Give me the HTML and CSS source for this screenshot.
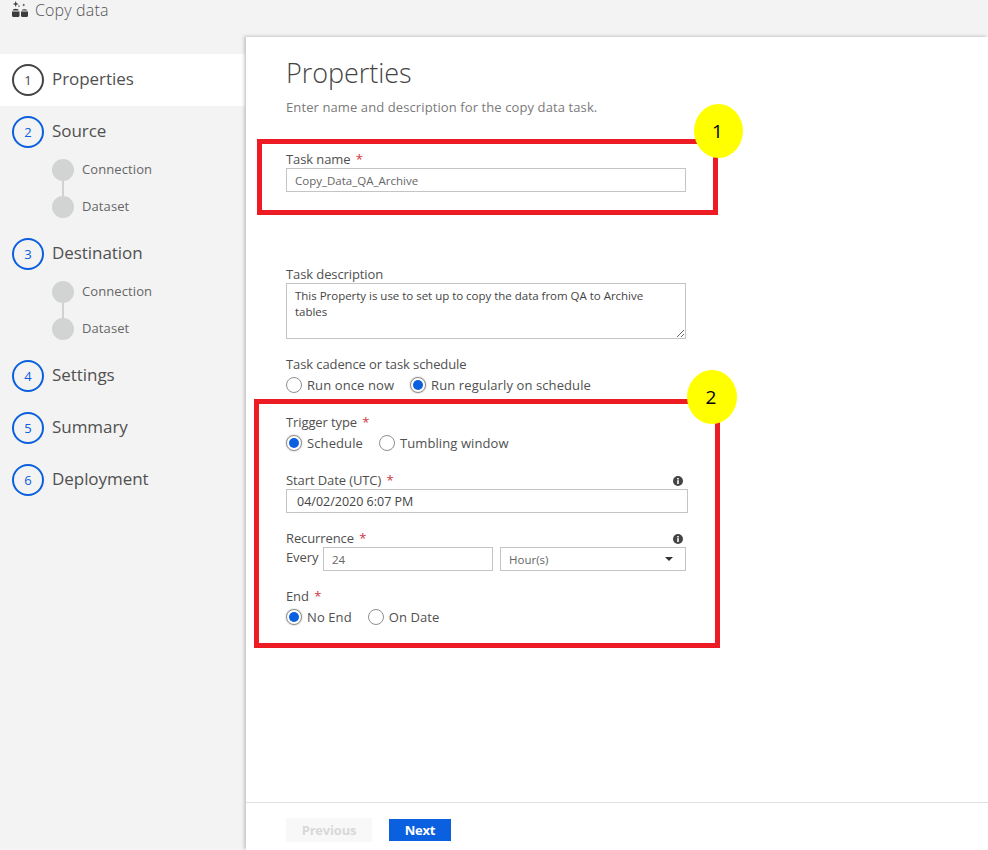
FILE: index.html
```html
<!DOCTYPE html>
<html lang="en">
<head>
<meta charset="utf-8">
<title>Copy data</title>
<link rel="stylesheet" href="styles.css">
</head>
<body>
<div class="app">
  <header class="topbar">
    <svg class="logo" width="17" height="17" viewBox="0 0 17 17">
      <path class="logo-dark" d="M0 10.500h7.500v4a1.500 1.500 0 0 1-1.500 1.500h-4.500a1.500 1.500 0 0 1-1.500-1.500z"/>
      <path class="logo-dark" d="M9 10.500h7v4a1.500 1.500 0 0 1-1.500 1.500h-4a1.500 1.500 0 0 1-1.500-1.500z"/>
      <path class="logo-dark" d="M.7 9.500a3 1.800 0 0 1 6 0zM9.600 9.500a3 1.800 0 0 1 5.800 0z"/>
      <path class="logo-dark" d="M3.700 0l.8 2.200 2.200.8-2.200.8-.8 2.200-.8-2.200-2.200-.8 2.200-.8zM11.800 2.500l.4 1.100 1.100.4-1.100.4-.4 1.100-.4-1.100-1.100-.4 1.100-.4zM7 4l.3.8.8.3-.8.3-.3.8-.3-.8-.8-.3.8-.3z"/>
    </svg>
    <span class="topbar-title">Copy data</span>
  </header>
  <div class="body-row">
    <nav class="sidebar">
      <div class="step step-active"><span class="step-num">1</span><span class="step-name">Properties</span></div>
      <div class="step"><span class="step-num">2</span><span class="step-name">Source</span></div>
      <div class="substeps">
        <div class="substep"><span class="dot"></span><span class="substep-name">Connection</span></div>
        <div class="substep"><span class="dot"></span><span class="substep-name">Dataset</span></div>
      </div>
      <div class="step"><span class="step-num">3</span><span class="step-name">Destination</span></div>
      <div class="substeps">
        <div class="substep"><span class="dot"></span><span class="substep-name">Connection</span></div>
        <div class="substep"><span class="dot"></span><span class="substep-name">Dataset</span></div>
      </div>
      <div class="step"><span class="step-num">4</span><span class="step-name">Settings</span></div>
      <div class="step"><span class="step-num">5</span><span class="step-name">Summary</span></div>
      <div class="step"><span class="step-num">6</span><span class="step-name">Deployment</span></div>
    </nav>
    <main class="panel">
      <div class="panel-scroll">
        <h1 class="title">Properties</h1>
        <p class="subtitle">Enter name and description for the copy data task.</p>

        <div class="field field-name">
          <label class="label">Task name <em>*</em></label>
          <input class="input" type="text" value="Copy_Data_QA_Archive">
        </div>

        <div class="field field-desc">
          <label class="label">Task description</label>
          <textarea class="textarea">This Property is use to set up to copy the data from QA to Archive tables</textarea>
        </div>

        <div class="field field-cadence">
          <label class="label">Task cadence or task schedule</label>
          <div class="radios">
            <span class="radio"><i class="circle"></i>Run once now</span>
            <span class="radio radio-on"><i class="circle"></i>Run regularly on schedule</span>
          </div>
        </div>

        <div class="field field-trigger">
          <label class="label">Trigger type <em>*</em></label>
          <div class="radios">
            <span class="radio radio-on"><i class="circle"></i>Schedule</span>
            <span class="radio"><i class="circle"></i>Tumbling window</span>
          </div>
        </div>

        <div class="field field-wide field-next">
          <div class="label-row">
            <label class="label">Start Date (UTC) <em>*</em></label>
            <svg class="info" width="10" height="10" viewBox="0 0 10 10"><circle cx="5" cy="5" r="5"/><rect class="info-i" x="4.200" y="4.200" width="1.600" height="3.800"/><rect class="info-i" x="4.200" y="2" width="1.600" height="1.500"/></svg>
          </div>
          <input class="input input-date" type="text" value="04/02/2020 6:07 PM">
        </div>

        <div class="field field-next">
          <div class="label-row label-row-narrow">
            <label class="label">Recurrence <em>*</em></label>
            <svg class="info" width="10" height="10" viewBox="0 0 10 10"><circle cx="5" cy="5" r="5"/><rect class="info-i" x="4.200" y="4.200" width="1.600" height="3.800"/><rect class="info-i" x="4.200" y="2" width="1.600" height="1.500"/></svg>
          </div>
          <div class="recur">
            <span class="every">Every</span>
            <input class="input input-num" type="text" value="24">
            <div class="select"><span>Hour(s)</span><i class="caret"></i></div>
          </div>
        </div>

        <div class="field field-next">
          <label class="label">End <em>*</em></label>
          <div class="radios">
            <span class="radio radio-on"><i class="circle"></i>No End</span>
            <span class="radio"><i class="circle"></i>On Date</span>
          </div>
        </div>
      </div>
      <footer class="actions">
        <button class="btn btn-prev" type="button">Previous</button>
        <button class="btn btn-next" type="button">Next</button>
      </footer>
      <div class="mark mark-one"></div>
      <div class="mark mark-two"></div>
      <div class="badge badge-one">1</div>
      <div class="badge badge-two">2</div>
    </main>
  </div>
</div>
</body>
</html>
```
FILE: styles.css
```css
* { box-sizing: border-box; }
html, body { margin: 0; height: 100%; overflow: hidden; }
body { font-family: "Open Sans", "Noto Sans", sans-serif; color: #444; background: #f3f3f3; }
.app { width: 988px; height: 850px; display: flex; flex-direction: column; }

.topbar { height: 37px; flex: none; display: flex; align-items: flex-start; padding: 1px 0 0 12px; gap: 6px; }
.logo-dark { fill: #3c3c3c; }
.topbar-title { font-size: 16px; line-height: 18px; color: #555; letter-spacing: .15px; font-weight: 300; }

.body-row { flex: 1; display: flex; min-height: 0; }
.sidebar { width: 245px; flex: none; padding-top: 17px; }
.step { height: 52px; display: flex; align-items: center; padding-left: 12px; gap: 8px; }
.step-active { background: #fff; }
.step-num { width: 32px; height: 32px; border-radius: 50%; border: 2px solid #0a60df; color: #0a60df; background: #f3f3f3; font-size: 13px; display: flex; align-items: center; justify-content: center; }
.step-active .step-num { border-color: #444; color: #444; background: #fff; }
.step-name { font-size: 17px; color: #505050; letter-spacing: -.05px; padding-bottom: 4px; }
.substeps { padding-left: 52px; display: flex; flex-direction: column; gap: 15px; margin-top: 1px; margin-bottom: 10px; position: relative; }
.substeps::before { content: ""; position: absolute; left: 62px; top: 11px; height: 30px; width: 2px; background: #d2d2d2; }
.substep { height: 22px; display: flex; align-items: center; gap: 8px; font-size: 13px; color: #666; letter-spacing: .1px; position: relative; }
.substep-name { padding-bottom: 2px; }
.dot { width: 22px; height: 22px; border-radius: 50%; background: #d2d4d4; }

.panel { flex: 1; position: relative; background: #fff; margin-left: 1px; box-shadow: -2px -1px 3px rgba(0,0,0,.18); display: flex; flex-direction: column; }
.panel-scroll { flex: 1; padding: 18px 0 0 40px; }
.title { font-size: 27px; font-weight: 300; margin: 0; line-height: 36px; color: #444; letter-spacing: -.05px; }
.subtitle { font-size: 13px; line-height: 17px; margin: 8px 0 0; color: #7a7a7a; letter-spacing: .1px; }

.field { width: 400px; }
.field-name { margin-top: 35px; }
.field-desc { margin-top: 74px; }
.field-cadence { margin-top: 17px; }
.field-trigger { margin-top: 17px; }
.field-next { margin-top: 17px; }
.field-wide { width: 402px; }
.label-row { display: flex; justify-content: space-between; align-items: center; padding-right: 5px; }
.label-row-narrow { padding-right: 3px; }
.label { display: block; font-size: 13px; line-height: 17px; color: #505050; letter-spacing: -.1px; }
.label em { font-style: normal; color: #d1343e; margin-left: 2px; }
.info { fill: #444; }
.info-i { fill: #fff; }

.input { display: block; width: 100%; height: 24px; border: 1px solid #c4c4c4; padding: 0 8px; font: 11.5px "Open Sans", "Noto Sans", sans-serif; color: #666; background: #fff; outline: 0; border-radius: 0; }
.input-date { font-size: 12.5px; color: #444; padding-left: 10px; }
.textarea { display: block; width: 100%; height: 56px; border: 1px solid #c4c4c4; padding: 4px 8px; font: 11.5px/16px "Open Sans", "Noto Sans", sans-serif; color: #444; resize: both; outline: 0; border-radius: 0; letter-spacing: -.02px; }

.radios { display: flex; gap: 16px; height: 24px; align-items: center; }
.radio { display: inline-flex; align-items: center; gap: 5px; font-size: 13px; color: #505050; letter-spacing: .1px; }
.circle { width: 16px; height: 16px; flex: none; border-radius: 50%; border: 1px solid #8f8f8f; background: #fff; position: relative; }
.radio-on .circle { box-shadow: 0 0 2px rgba(0,0,0,.3); }
.radio-on .circle::after { content: ""; position: absolute; left: 2px; top: 2px; width: 10px; height: 10px; border-radius: 50%; background: #0a60df; }

.recur { display: flex; align-items: flex-start; }
.every { font-size: 13px; line-height: 17px; width: 37px; flex: none; color: #505050; letter-spacing: -.1px; margin-top: 2px; }
.input-num { width: 170px; flex: none; color: #666; }
.select { flex: none; width: 186px; height: 24px; margin-left: 7px; border: 1px solid #c4c4c4; display: flex; align-items: center; justify-content: space-between; padding: 0 12px 0 8px; font-size: 11.5px; color: #666; }
.caret { width: 0; height: 0; border-left: 4px solid transparent; border-right: 4px solid transparent; border-top: 4px solid #333; }

.actions { height: 48px; flex: none; border-top: 1px solid #e0e0e0; padding: 15px 0 0 40px; display: flex; align-items: flex-start; gap: 17px; }
.btn { border: 0; font: 700 13px "Open Sans", "Noto Sans", sans-serif; padding: 0; letter-spacing: -.2px; }
.btn-prev { width: 86px; height: 24px; background: #f8f8f8; color: #d8d8d8; }
.btn-next { width: 62px; height: 22px; margin-top: 1px; background: #0a60df; color: #fff; }

.mark { position: absolute; border: 5px solid #ed1c24; pointer-events: none; }
.mark-one { left: 11px; top: 102px; width: 461px; height: 76px; }
.mark-two { left: 8px; top: 362px; width: 466px; height: 249px; }
.badge { position: absolute; background: #ffff00; border-radius: 50%; color: #000; font-size: 19px; display: flex; align-items: center; justify-content: center; padding: 0 2px 1px 0; }
.badge-one { left: 448px; top: 67px; width: 49px; height: 54px; }
.badge-two { left: 441px; top: 333px; width: 50px; height: 54px; }
```
